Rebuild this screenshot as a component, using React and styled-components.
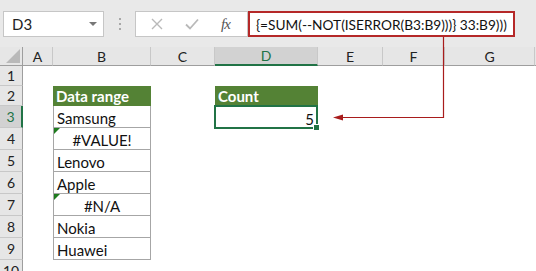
import React from "react";
import styled, { createGlobalStyle } from "styled-components";

const GlobalStyle = createGlobalStyle`
  html, body { margin: 0; padding: 0; background: #fff; }
  body { font-family: Lato, "Liberation Sans", sans-serif; overflow: hidden; }
`;

const Window = styled.div`
  position: relative;
  width: 536px;
  height: 271px;
  overflow: hidden;
  background: #fff;
`;

const Toolbar = styled.div`
  display: flex;
  align-items: stretch;
  height: 47px;
  padding: 11px 0 10px 3px;
  box-sizing: border-box;
  background: #e9e9e9;
`;

const NameBox = styled.div`
  width: 101px;
  box-sizing: border-box;
  display: flex;
  align-items: center;
  justify-content: space-between;
  padding: 0 6px 0 8px;
  background: #fff;
  border: 1px solid #c6c6c6;
  font-size: 15px;
  color: #222;
`;

const Caret = styled.span`
  width: 0;
  height: 0;
  border-left: 4px solid transparent;
  border-right: 4px solid transparent;
  border-top: 4px solid #777;
`;

const Grip = styled.div`
  width: 31px;
  display: flex;
  flex-direction: column;
  align-items: center;
  justify-content: center;
  gap: 3px;

  span {
    width: 2px;
    height: 2px;
    background: #a8a8a8;
  }
`;

const FxBox = styled.div`
  width: 113px;
  box-sizing: border-box;
  display: flex;
  align-items: center;
  justify-content: space-around;
  padding: 0 6px 0 4px;
  background: #fff;
  border: 1px solid #c6c6c6;
`;

const FxLabel = styled.span`
  font-family: "Liberation Serif", serif;
  font-style: italic;
  font-size: 15px;
  color: #555;
  letter-spacing: -1px;
`;

const FormulaBox = styled.div`
  width: 267px;
  box-sizing: border-box;
  display: flex;
  align-items: center;
  padding-left: 6px;
  background: #fff;
  border: 2px solid #b52828;
  font-size: 13.7px;
  color: #111;
  white-space: nowrap;
  overflow: hidden;
`;

const Sheet = styled.div`
  display: grid;
  grid-template-columns: 23px 30px 98px 64px 103px 65px 62px 90px 1fr;
  grid-template-rows: 19px 20px 20px repeat(7, 22px) 22px;
`;

const Corner = styled.div`
  position: relative;
  background: #e6e6e6;
  border-right: 1px solid #9e9e9e;
  border-bottom: 1px solid #9e9e9e;

  &::after {
    content: "";
    position: absolute;
    right: 2px;
    bottom: 2px;
    width: 0;
    height: 0;
    border-left: 14px solid transparent;
    border-bottom: 14px solid #b9b9b9;
  }
`;

const ColHeader = styled.div`
  display: flex;
  align-items: center;
  justify-content: center;
  font-size: 14px;
  color: ${(p) => (p.$active ? "#217346" : "#222")};
  background: ${(p) => (p.$active ? "#d2d2d2" : "#e6e6e6")};
  border-right: 1px solid #c8c8c8;
  border-bottom: ${(p) => (p.$active ? "2px solid #217346" : "1px solid #9e9e9e")};
`;

const RowHeader = styled.div`
  display: flex;
  align-items: center;
  justify-content: center;
  font-size: 14px;
  color: ${(p) => (p.$active ? "#217346" : "#222")};
  background: ${(p) => (p.$active ? "#d2d2d2" : "#e6e6e6")};
  border-bottom: 1px solid #c8c8c8;
  border-right: ${(p) => (p.$active ? "2px solid #217346" : "1px solid #9e9e9e")};
`;

const Cell = styled.div`
  position: relative;
  box-sizing: border-box;
  display: flex;
  align-items: center;
  justify-content: ${(p) => (p.$align === "center" ? "center" : p.$align === "right" ? "flex-end" : "flex-start")};
  padding: 0 3px;
  font-size: 15px;
  color: #111;
  white-space: nowrap;
`;

const HeadCell = styled(Cell)`
  background: #548235;
  color: #fff;
  font-weight: 700;
`;

const DataCell = styled(Cell)`
  padding-top: 3px;
  border-left: 1px solid #a6a6a6;
  border-right: 1px solid #a6a6a6;
  border-bottom: 1px solid #a6a6a6;
`;

const ErrorFlag = styled.span`
  position: absolute;
  left: 0;
  top: 0;
  width: 0;
  height: 0;
  border-top: 6px solid #1e7b1e;
  border-right: 6px solid transparent;
`;

const ActiveCell = styled(Cell)`
  margin: -1px 0 -1px -1px;
  border: 2px solid #217346;
  padding: 3px 2px 0 3px;
`;

const FillHandle = styled.span`
  position: absolute;
  right: -4px;
  bottom: -4px;
  width: 5px;
  height: 5px;
  background: #217346;
  border: 1px solid #fff;
`;

const Overlay = styled.svg`
  position: absolute;
  left: 0;
  top: 0;
  pointer-events: none;
`;

const columns = ["A", "B", "C", "D", "E", "F", "G", ""];

const rows = [
  { n: 1 },
  { n: 2, b: { text: "Data range", head: true }, d: { text: "Count", head: true } },
  { n: 3, b: { text: "Samsung" }, d: { text: "5", active: true } },
  { n: 4, b: { text: "#VALUE!", error: true } },
  { n: 5, b: { text: "Lenovo" } },
  { n: 6, b: { text: "Apple" } },
  { n: 7, b: { text: "#N/A", error: true } },
  { n: 8, b: { text: "Nokia" } },
  { n: 9, b: { text: "Huawei" } },
  { n: 10 },
];

const renderCell = (cell, key) => {
  if (!cell) return <Cell key={key} />;
  if (cell.head) return <HeadCell key={key}>{cell.text}</HeadCell>;
  if (cell.active)
    return (
      <ActiveCell key={key} $align="right">
        {cell.text}
        <FillHandle />
      </ActiveCell>
    );
  return (
    <DataCell key={key} $align={cell.error ? "center" : "left"}>
      {cell.error && <ErrorFlag />}
      {cell.text}
    </DataCell>
  );
};

const App = () => {
  return (
    <Window>
      <GlobalStyle />
      <Toolbar>
        <NameBox>
          D3
          <Caret />
        </NameBox>
        <Grip>
          <span />
          <span />
          <span />
        </Grip>
        <FxBox>
          <svg width="12" height="12" viewBox="0 0 12 12">
            <path d="M1 1L11 11M11 1L1 11" stroke="#b9b9b9" strokeWidth="1.4" fill="none" />
          </svg>
          <svg width="14" height="12" viewBox="0 0 14 12">
            <path d="M1 6.5L5 10.5L13 1.5" stroke="#b9b9b9" strokeWidth="1.8" fill="none" />
          </svg>
          <FxLabel>fx</FxLabel>
        </FxBox>
        <FormulaBox>{"{=SUM(--NOT(ISERROR(B3:B9)))} 33:B9)))"}</FormulaBox>
      </Toolbar>
      <Sheet>
        <Corner />
        {columns.map((c) => (
          <ColHeader key={c || "h"} $active={c === "D"}>
            {c}
          </ColHeader>
        ))}
        {rows.map((r) => (
          <React.Fragment key={r.n}>
            <RowHeader $active={r.n === 3}>{r.n}</RowHeader>
            <Cell />
            {renderCell(r.b, "b")}
            <Cell />
            {renderCell(r.d, "d")}
            <Cell />
            <Cell />
            <Cell />
            <Cell />
          </React.Fragment>
        ))}
      </Sheet>
      <Overlay width="536" height="271">
        <path d="M443.5 37 V117.5 H342" stroke="#a81c1c" strokeWidth="1.2" fill="none" />
        <polygon points="333,117.5 343,114.5 343,120.5" fill="#a81c1c" />
      </Overlay>
    </Window>
  );
};

export default App;
